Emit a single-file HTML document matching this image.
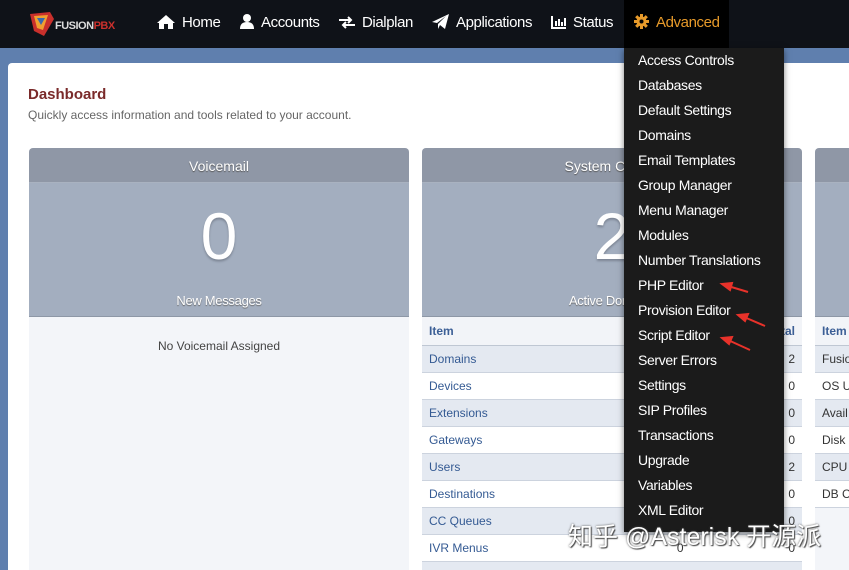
<!DOCTYPE html>
<html><head><meta charset="utf-8"><style>
*{margin:0;padding:0;box-sizing:border-box}
html,body{width:849px;height:570px;overflow:hidden}
body{background:#5f7fae;font-family:"Liberation Sans",Arial,sans-serif;position:relative}
.nav{position:absolute;left:0;top:0;width:849px;height:48px;background:#0f1218}
.ni{position:absolute;top:14px;color:#fff;font-size:15px;white-space:nowrap;letter-spacing:-0.4px}
.ni svg{vertical-align:-2px;margin-right:7px}
.adv{position:absolute;left:624px;top:0;width:105px;height:48px;background:#000}
.main{position:absolute;left:8px;top:63px;width:841px;height:520px;background:#fff;border-radius:4px 0 0 0}
h1{position:absolute;left:28px;top:86px;font-size:15px;color:#7a2a2a;font-weight:bold}
.sub{position:absolute;left:28px;top:108px;font-size:12px;color:#666}
.card{position:absolute;top:148px;width:380px;height:430px;background:#f3f5f9;border-radius:4px 4px 0 0;overflow:hidden}
.ch{height:35px;background:#8f97a6;color:#fff;text-align:center;font-size:14px;line-height:36px;border-bottom:1px solid #a9b2c0;text-shadow:0 1px 1px #555}
.cb{height:134px;background:#a3aebf;color:#fff;text-align:center;position:relative;border-bottom:1px solid #8d97a6}
.big{position:absolute;left:0;right:0;top:18px;font-size:66px;line-height:70px;text-shadow:0 2px 2px #7c8594}
.lbl{position:absolute;left:0;right:0;top:110px;font-size:13px;text-shadow:0 1px 1px #666;letter-spacing:-0.3px}
table{width:100%;border-collapse:collapse;font-size:12px}
td{height:27px;padding:0 7px;border-bottom:1px solid #ccd3de;color:#345a93}
tr.o td{background:#e4e9f1}tr.e td{background:#fff}
th{height:28px;text-align:left;padding:0 7px;color:#3c5f96;font-weight:bold;font-size:12px;border-bottom:1px solid #bfc7d3;background:#f2f4f8}
.dd{position:absolute;left:624px;top:48px;width:160px;height:484px;background:#1b1b1b;box-shadow:0 2px 6px rgba(0,0,0,.5)}
.dd div{position:absolute;left:14px;color:#fff;font-size:14px;letter-spacing:-0.35px}
.wm{position:absolute;left:568px;top:517px;font-size:25px;color:#fff;font-family:"Liberation Sans","Noto Sans CJK SC",sans-serif;text-shadow:0 0 2px #555,1px 1px 1px #444;white-space:nowrap}
</style></head><body>
<div class="nav">
<svg style="position:absolute;left:29px;top:11px" width="90" height="26"><path d="M1 3 L21 1 L25 8 L15 25 L5 20 Z" fill="#c9302c"/><path d="M5 5 L19 4 L14 19 L8 17Z" fill="#f0a030"/><path d="M8 7 L16 7 L12 14Z" fill="#3a6ab0"/><text x="26" y="18" font-size="11" font-weight="bold" fill="#ddd" font-family="Liberation Sans" letter-spacing="-0.5">FUSION<tspan fill="#c9302c">PBX</tspan></text></svg>
<div class="ni" style="left:157px"><svg width="18" height="14" viewBox="0 0 18 14"><path d="M9 0 L18 8 L16 8 L16 14 L11 14 L11 9 L7 9 L7 14 L2 14 L2 8 L0 8Z" fill="#fff"/></svg>Home</div>
<div class="ni" style="left:240px"><svg width="14" height="15" viewBox="0 0 14 15"><circle cx="7" cy="4" r="4" fill="#fff"/><path d="M0 15 Q0 8 7 8 Q14 8 14 15Z" fill="#fff"/></svg>Accounts</div>
<div class="ni" style="left:339px"><svg width="16" height="13" viewBox="0 0 16 13"><path d="M0 4h12M9 1l3 3-3 3M16 9H4M7 6l-3 3 3 3" stroke="#fff" stroke-width="2" fill="none"/></svg>Dialplan</div>
<div class="ni adv"></div>
<div class="ni" style="left:432px"><svg width="17" height="15" viewBox="0 0 17 15"><path d="M0 8 L17 0 L13 15 L8 11 L6 15 L6 10 L14 2 L5 9Z" fill="#fff"/></svg>Applications</div>
<div class="ni" style="left:551px"><svg width="15" height="13" viewBox="0 0 15 13"><path d="M0 0v13h15v-2H2V0z M4 5h2v5H4z M7 3h2v7H7z M10 6h2v4h-2z M13 2h2v8h-2z" fill="#fff"/></svg>Status</div>
<div class="ni" style="left:634px;color:#e79a2a"><svg width="15" height="15" viewBox="0 0 15 15"><circle cx="7.5" cy="7.5" r="5" fill="#e79a2a"/><path d="M6 0h3v15H6zM0 6h15v3H0z" fill="#e79a2a"/><path d="M6 0h3v15H6zM0 6h15v3H0z" fill="#e79a2a" transform="rotate(45 7.5 7.5)"/><circle cx="7.5" cy="7.5" r="2" fill="#000"/></svg>Advanced</div>
</div>
<div class="main"></div>
<h1>Dashboard</h1>
<div class="sub">Quickly access information and tools related to your account.</div>
<div class="card" style="left:29px"><div class="ch">Voicemail</div><div class="cb"><div class="big">0</div><div class="lbl">New Messages</div></div>
<div style="text-align:center;font-size:12px;color:#444;margin-top:22px">No Voicemail Assigned</div></div>
<div class="card" style="left:422px"><div class="ch">System Counts</div><div class="cb"><div class="big">2</div><div class="lbl">Active Domains</div></div>
<table><tr><th>Item</th><th></th><th style="text-align:right">Total</th></tr>
<tr class="o"><td>Domains</td><td></td><td style="text-align:right;color:#333">2</td></tr>
<tr class="e"><td>Devices</td><td></td><td style="text-align:right;color:#333">0</td></tr>
<tr class="o"><td>Extensions</td><td></td><td style="text-align:right;color:#333">0</td></tr>
<tr class="e"><td>Gateways</td><td></td><td style="text-align:right;color:#333">0</td></tr>
<tr class="o"><td>Users</td><td></td><td style="text-align:right;color:#333">2</td></tr>
<tr class="e"><td>Destinations</td><td></td><td style="text-align:right;color:#333">0</td></tr>
<tr class="o"><td>CC Queues</td><td></td><td style="text-align:right;color:#333">0</td></tr>
<tr class="e"><td>IVR Menus</td><td style="color:#333;text-align:right">0</td><td style="text-align:right;color:#333">0</td></tr>
<tr class="o"><td>&nbsp;</td><td></td><td></td></tr></table></div>
<div class="card" style="left:815px;width:60px"><div class="ch"></div><div class="cb"></div>
<table><tr><th>Item</th></tr><tr class="o"><td style="color:#333">Fusion</td></tr><tr class="e"><td style="color:#333">OS Up</td></tr><tr class="o"><td style="color:#333">Avail</td></tr><tr class="e"><td style="color:#333">Disk</td></tr><tr class="o"><td style="color:#333">CPU</td></tr><tr class="e"><td style="color:#333">DB C</td></tr></table></div>
<div class="dd">
<div style="top:4px">Access Controls</div><div style="top:29px">Databases</div><div style="top:54px">Default Settings</div><div style="top:79px">Domains</div><div style="top:104px">Email Templates</div><div style="top:129px">Group Manager</div><div style="top:154px">Menu Manager</div><div style="top:179px">Modules</div><div style="top:204px">Number Translations</div><div style="top:229px">PHP Editor</div><div style="top:254px">Provision Editor</div><div style="top:279px">Script Editor</div><div style="top:304px">Server Errors</div><div style="top:329px">Settings</div><div style="top:354px">SIP Profiles</div><div style="top:379px">Transactions</div><div style="top:404px">Upgrade</div><div style="top:429px">Variables</div><div style="top:454px">XML Editor</div>
</div>
<svg style="position:absolute;left:0;top:0" width="849" height="570"><g stroke="#e8322a" stroke-width="2" fill="#e8322a"><path d="M748 292 L728 286"/><path d="M722 284 L732 283 L730 290Z"/><path d="M765 326 L744 317"/><path d="M738 315 L748 314 L745 321Z"/><path d="M750 350 L728 340"/><path d="M722 338 L732 337 L729 344Z"/></g></svg>
<div class="wm">知乎 @Asterisk 开源派</div>
</body></html>
